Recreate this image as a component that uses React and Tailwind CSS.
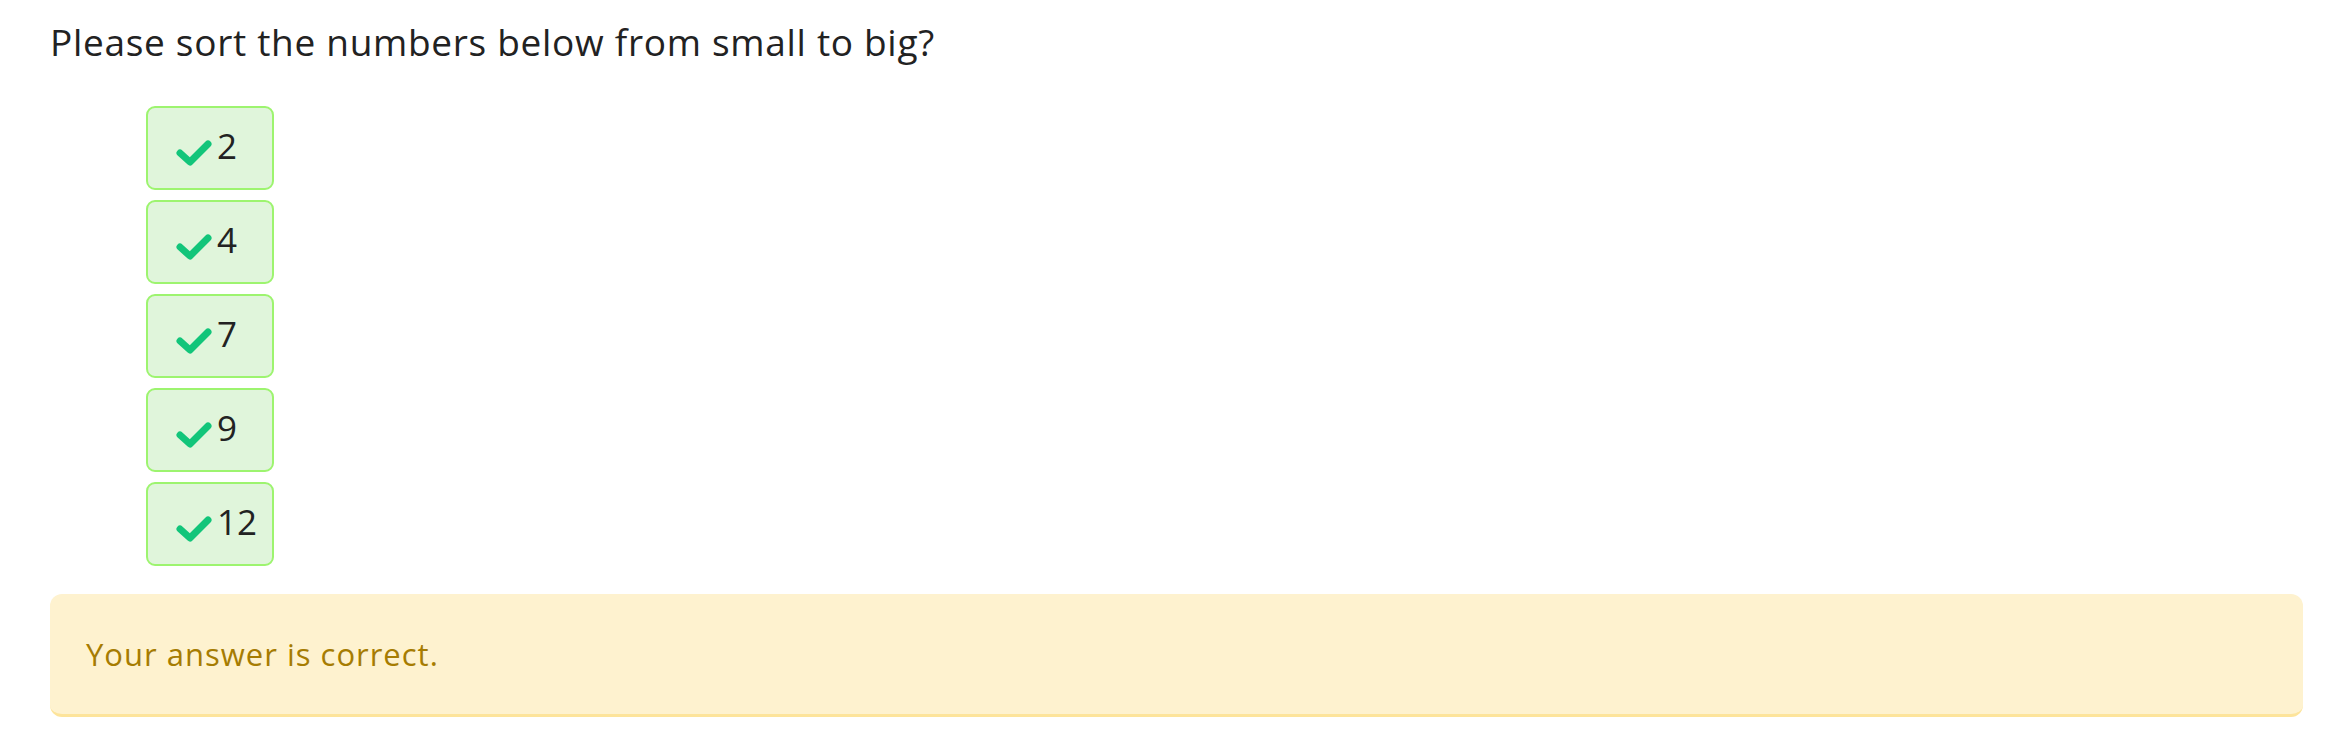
const numbers = [2, 4, 7, 9, 12];

function CheckMark() {
  return (
    <svg width="36" height="27" viewBox="0 0 36 27" className="shrink-0">
      <polyline
        points="4,13 14,22 32,4"
        fill="none"
        stroke="#12c57a"
        strokeWidth="7"
        strokeLinecap="round"
        strokeLinejoin="round"
      />
    </svg>
  );
}

export default function App() {
  return (
    <div
      className="w-full min-h-[746px] bg-white pl-[50px] pr-[29px] pt-[14px] text-[#222222]"
      style={{ fontFamily: '"Open Sans", "Liberation Sans", sans-serif' }}
    >
      {/* Question */}
      <h1 className="text-[37px] leading-[56px] font-normal tracking-[0.7px]">
        Please sort the numbers below from small to big?
      </h1>

      {/* Sorted answers */}
      <ul className="mt-[36px] pl-[96px] flex flex-col gap-[10px]">
        {numbers.map((n) => (
          <li
            key={n}
            className="w-[128px] h-[84px] rounded-[9px] border-2 border-[#9df46f] bg-[#e0f5db] flex items-center pl-[28px] gap-[5px]"
          >
            <span className="pt-[10px]">
              <CheckMark />
            </span>
            <span className="text-[35px] leading-none pb-[6px]">{n}</span>
          </li>
        ))}
      </ul>

      {/* Feedback */}
      <div className="mt-[28px] h-[123px] rounded-[12px] bg-[#fef2cf] border-b-[3px] border-[#fde49b] flex items-center px-[36px]">
        <p className="text-[31px] text-[#a67c02] tracking-[1px]">
          Your answer is correct.
        </p>
      </div>
    </div>
  );
}
